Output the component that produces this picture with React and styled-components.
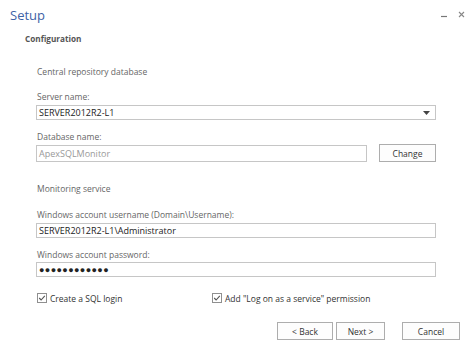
import styled, { createGlobalStyle } from "styled-components";

const Global = createGlobalStyle`
html, body {
    margin: 0;
    padding: 0;
    background: #fff;
}
body {
    font-family: "Open Sans", "Noto Sans", sans-serif;
}
`

const Window = styled.div`
width: 474px;
height: 350px;
box-sizing: border-box;
display: flex;
flex-direction: column;
background: #fff;
`

const TitleBar = styled.div`
height: 28px;
display: flex;
align-items: center;
justify-content: space-between;
padding: 2px 9px 0 10px;
box-sizing: border-box;
`

const Title = styled.div`
font-size: 13px;
color: #3d62a6;
line-height: 18px;
`

const Controls = styled.div`
display: flex;
align-items: center;
gap: 10px;
margin-top: -2px;
`

const Heading = styled.div`
margin: 5px 0 0 25px;
font-size: 8.2px;
line-height: 12px;
font-weight: 700;
color: #555;
`

const Form = styled.div`
display: flex;
flex-direction: column;
padding-left: 36px;
width: 400px;
`

const Section = styled.div`
margin-top: ${p => p.$top}px;
font-size: 8.5px;
line-height: 12px;
color: #666;
padding-left: 1px;
`

const Field = styled.div`
display: flex;
flex-direction: column;
gap: ${p => p.$gap ?? 2}px;
margin-top: ${p => p.$top}px;
`

const Label = styled.div`
font-size: 8.5px;
line-height: 12px;
color: #666;
padding-left: 1px;
`

const Row = styled.div`
display: flex;
align-items: center;
gap: 12px;
`

const Box = styled.div`
box-sizing: border-box;
height: 17px;
flex: 1;
display: flex;
align-items: center;
justify-content: space-between;
padding: 0 5px 0 2px;
border: 1px solid #c6c6c6;
background: #fff;
font-size: 9px;
color: ${p => (p.$muted ? "#999" : "#222")};
letter-spacing: ${p => (p.$dots ? "0.4px" : "0")};
`

const Button = styled.div`
box-sizing: border-box;
height: 18px;
width: ${p => p.$w}px;
display: flex;
align-items: center;
justify-content: center;
border: 1px solid #adadad;
background: #fdfdfd;
font-size: 8.5px;
color: #333;
`

const CheckRow = styled.div`
display: flex;
align-items: center;
margin: 15px 0 0 37px;
height: 12px;
`

const Check = styled.label`
display: flex;
align-items: center;
gap: 3px;
font-size: 8.5px;
color: #333;
width: ${p => p.$w}px;
`

const Footer = styled.div`
display: flex;
justify-content: flex-end;
gap: 3px;
margin-top: 18px;
padding-right: 14px;
`

const Spacer = styled.div`
width: 11px;
`

const CheckBox = () => (
    <svg width="10" height="10" viewBox="0 0 10 10">
        <rect x="0.5" y="0.5" width="9" height="9" fill="#fff" stroke="#8f8f8f" />
        <path d="M2.2 5 L4.1 7 L7.8 2.8" fill="none" stroke="#555" strokeWidth="1.1" />
    </svg>
)

const App = () => {
    return (
        <>
            <Global />
            <Window>
                <TitleBar>
                    <Title>Setup</Title>
                    <Controls>
                        <svg width="7" height="7" viewBox="0 0 7 7">
                            <path d="M0 5.5 H6" stroke="#777" strokeWidth="1.2" />
                        </svg>
                        <svg width="7" height="7" viewBox="0 0 7 7">
                            <path d="M1 1 L6 6 M6 1 L1 6" stroke="#888" strokeWidth="1.1" />
                        </svg>
                    </Controls>
                </TitleBar>
                <Heading>Configuration</Heading>
                <Form>
                    <Section $top={21}>Central repository database</Section>
                    <Field $top={13}>
                        <Label>Server name:</Label>
                        <Box>
                            SERVER2012R2-L1
                            <svg width="7" height="4" viewBox="0 0 7 4">
                                <path d="M0 0 H7 L3.5 4 Z" fill="#444" />
                            </svg>
                        </Box>
                    </Field>
                    <Field $top={11} $gap={1}>
                        <Label>Database name:</Label>
                        <Row>
                            <Box $muted>ApexSQLMonitor</Box>
                            <Button $w={57}>Change</Button>
                        </Row>
                    </Field>
                    <Section $top={21}>Monitoring service</Section>
                    <Field $top={14}>
                        <Label>Windows account username (Domain\Username):</Label>
                        <Box>SERVER2012R2-L1\Administrator</Box>
                    </Field>
                    <Field $top={11} $gap={1}>
                        <Label>Windows account password:</Label>
                        <Box $dots>●●●●●●●●●●●●</Box>
                    </Field>
                </Form>
                <CheckRow>
                    <Check $w={175}><CheckBox />Create a SQL login</Check>
                    <Check><CheckBox />Add "Log on as a service" permission</Check>
                </CheckRow>
                <Footer>
                    <Button $w={56}>&lt; Back</Button>
                    <Button $w={49}>Next &gt;</Button>
                    <Spacer />
                    <Button $w={58}>Cancel</Button>
                </Footer>
            </Window>
        </>
    )
}

export default App
